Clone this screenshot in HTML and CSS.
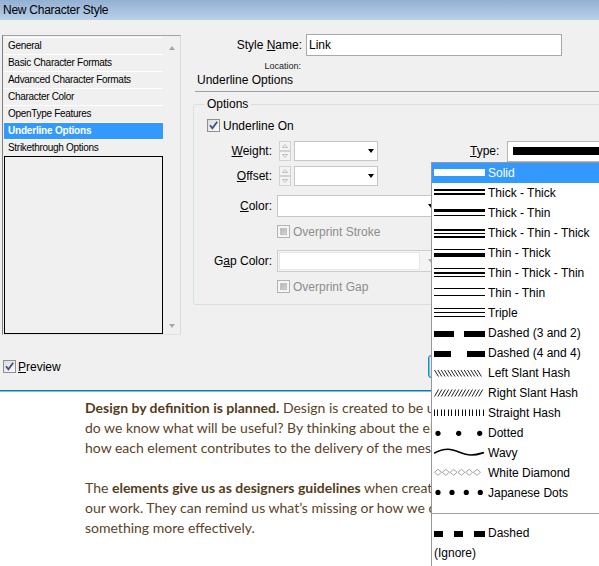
FILE: index.html
```html
<!DOCTYPE html>
<html lang="en">
<head>
<meta charset="utf-8">
<title>New Character Style</title>
<link rel="stylesheet" href="styles.css">
</head>
<body>
<div class="screen">
  <div class="titlebar">New Character Style</div>
  <div class="dialog">
    <div class="dialog-main">
      <div class="nav">
        <div class="nav-list">
          <div class="nav-item">General</div>
          <div class="nav-item">Basic Character Formats</div>
          <div class="nav-item">Advanced Character Formats</div>
          <div class="nav-item">Character Color</div>
          <div class="nav-item">OpenType Features</div>
          <div class="nav-item is-selected">Underline Options</div>
          <div class="nav-item">Strikethrough Options</div>
          <div class="nav-empty"></div>
        </div>
        <div class="nav-scroll">
          <span class="scroll-arrow up"></span>
          <span class="scroll-arrow down"></span>
        </div>
      </div>
      <div class="pane">
        <div class="name-row">
          <span class="name-label">Style <u>N</u>ame:</span>
          <div class="text-field">Link</div>
        </div>
        <div class="location">Location:</div>
        <div class="section-head">Underline Options</div>
        <fieldset class="group">
          <legend>Options</legend>
          <div class="row row-check">
            <span class="cb"><svg width="11" height="11" viewBox="0 0 11 11"><path d="M2 5.3 L4.4 8.2 L9.2 1.8" fill="none" stroke="#3b4f86" stroke-width="1.8"/></svg></span>
            <span class="cb-label">Underline On</span>
          </div>
          <div class="row row-field row-weight">
            <span class="lbl"><u>W</u>eight:</span>
            <span class="spinner"><svg width="12" height="20" viewBox="0 0 12 20"><rect x="0.5" y="0.5" width="11" height="9" fill="#f3f3f3" stroke="#d2d2d2"/><rect x="0.5" y="10.5" width="11" height="9" fill="#f3f3f3" stroke="#d2d2d2"/><path d="M3.5 6.5 L6 3.5 L8.5 6.5Z" fill="none" stroke="#b4b4b4" stroke-width="0.8"/><path d="M3.5 13.5 L6 16.5 L8.5 13.5Z" fill="none" stroke="#b4b4b4" stroke-width="0.8"/></svg></span>
            <span class="select select-small"><span class="arrow"></span></span>
            <span class="lbl type-lbl"><u>T</u>ype:</span>
            <span class="type-field"><span class="type-line"></span></span>
          </div>
          <div class="row row-field row-offset">
            <span class="lbl"><u>O</u>ffset:</span>
            <span class="spinner"><svg width="12" height="20" viewBox="0 0 12 20"><rect x="0.5" y="0.5" width="11" height="9" fill="#f3f3f3" stroke="#d2d2d2"/><rect x="0.5" y="10.5" width="11" height="9" fill="#f3f3f3" stroke="#d2d2d2"/><path d="M3.5 6.5 L6 3.5 L8.5 6.5Z" fill="none" stroke="#b4b4b4" stroke-width="0.8"/><path d="M3.5 13.5 L6 16.5 L8.5 13.5Z" fill="none" stroke="#b4b4b4" stroke-width="0.8"/></svg></span>
            <span class="select select-small"><span class="arrow"></span></span>
          </div>
          <div class="row row-color">
            <span class="lbl"><u>C</u>olor:</span>
            <span class="select select-wide"><span class="arrow"></span></span>
          </div>
          <div class="row row-check row-indent">
            <span class="cb cb-disabled"><span class="cb-fill"></span></span>
            <span class="cb-label is-disabled">Overprint Stroke</span>
          </div>
          <div class="row row-gap">
            <span class="lbl">G<u>a</u>p Color:</span>
            <span class="select select-wide is-disabled"><span class="select-inner"></span><span class="arrow"></span></span>
          </div>
          <div class="row row-check row-indent row-last">
            <span class="cb cb-disabled"><span class="cb-fill"></span></span>
            <span class="cb-label is-disabled">Overprint Gap</span>
          </div>
        </fieldset>
      </div>
    </div>
    <div class="dialog-foot">
      <div class="preview">
        <span class="cb"><svg width="11" height="11" viewBox="0 0 11 11"><path d="M2 5.3 L4.4 8.2 L9.2 1.8" fill="none" stroke="#3b4f86" stroke-width="1.8"/></svg></span>
        <span class="preview-label"><u>P</u>review</span>
      </div>
      <span class="button">OK</span>
    </div>
  </div>

  <div class="article">
    <p><b>Design by definition is planned.</b> Design is created to be useful. How<br>do we know what will be useful? By thinking about the elements and<br>how each element contributes to the delivery of the message.</p>
    <p>The <b>elements give us as designers guidelines</b> when creating and evaluating<br>our work. They can remind us what’s missing or how we can communicate<br>something more effectively.</p>
  </div>

  <div class="menu">
    <div class="menu-item is-active">
      <svg class="ico" width="51" height="20" viewBox="0 0 51 20"><rect x="0" y="6" width="51" height="7" fill="#fff"/></svg>
      <span>Solid</span>
    </div>
    <div class="menu-item">
      <svg class="ico" width="51" height="20" viewBox="0 0 51 20"><rect y="6" width="51" height="2"/><rect y="10" width="51" height="2"/></svg>
      <span>Thick - Thick</span>
    </div>
    <div class="menu-item">
      <svg class="ico" width="51" height="20" viewBox="0 0 51 20"><rect y="6" width="51" height="3"/><rect y="12" width="51" height="1"/></svg>
      <span>Thick - Thin</span>
    </div>
    <div class="menu-item">
      <svg class="ico" width="51" height="20" viewBox="0 0 51 20"><rect y="6" width="51" height="2"/><rect y="10" width="51" height="1"/><rect y="13" width="51" height="2"/></svg>
      <span>Thick - Thin - Thick</span>
    </div>
    <div class="menu-item">
      <svg class="ico" width="51" height="20" viewBox="0 0 51 20"><rect y="6" width="51" height="1"/><rect y="10" width="51" height="4"/></svg>
      <span>Thin - Thick</span>
    </div>
    <div class="menu-item">
      <svg class="ico" width="51" height="20" viewBox="0 0 51 20"><rect y="5" width="51" height="1"/><rect y="9" width="51" height="2"/><rect y="13" width="51" height="1"/></svg>
      <span>Thin - Thick - Thin</span>
    </div>
    <div class="menu-item">
      <svg class="ico" width="51" height="20" viewBox="0 0 51 20"><rect y="5" width="51" height="1"/><rect y="12" width="51" height="1"/></svg>
      <span>Thin - Thin</span>
    </div>
    <div class="menu-item">
      <svg class="ico" width="51" height="20" viewBox="0 0 51 20"><rect y="5" width="51" height="1"/><rect y="9" width="51" height="1"/><rect y="13" width="51" height="1"/></svg>
      <span>Triple</span>
    </div>
    <div class="menu-item">
      <svg class="ico" width="51" height="20" viewBox="0 0 51 20"><rect x="0" y="8" width="20" height="6"/><rect x="30" y="8" width="21" height="6"/></svg>
      <span>Dashed (3 and 2)</span>
    </div>
    <div class="menu-item">
      <svg class="ico" width="51" height="20" viewBox="0 0 51 20"><rect x="0" y="8" width="17" height="6"/><rect x="33" y="8" width="18" height="6"/></svg>
      <span>Dashed (4 and 4)</span>
    </div>
    <div class="menu-item">
      <svg class="ico" width="51" height="20" viewBox="0 0 51 20"><path d="M0.5 7 L4.5 13.5 M3.8 7 L7.8 13.5 M7.1 7 L11.1 13.5 M10.4 7 L14.4 13.5 M13.7 7 L17.7 13.5 M17 7 L21 13.5 M20.3 7 L24.3 13.5 M23.6 7 L27.6 13.5 M26.9 7 L30.9 13.5 M30.2 7 L34.2 13.5 M33.5 7 L37.5 13.5 M36.8 7 L40.8 13.5 M40.1 7 L44.1 13.5 M43.4 7 L47.4 13.5" fill="none" stroke="#222" stroke-width="1"/></svg>
      <span>Left Slant Hash</span>
    </div>
    <div class="menu-item">
      <svg class="ico" width="51" height="20" viewBox="0 0 51 20"><path d="M0.5 13.5 L4.5 6.5 M3.9 13.5 L7.9 6.5 M7.3 13.5 L11.3 6.5 M10.7 13.5 L14.7 6.5 M14.1 13.5 L18.1 6.5 M17.5 13.5 L21.5 6.5 M20.9 13.5 L24.9 6.5 M24.3 13.5 L28.3 6.5 M27.7 13.5 L31.7 6.5 M31.1 13.5 L35.1 6.5 M34.5 13.5 L38.5 6.5 M37.9 13.5 L41.9 6.5 M41.3 13.5 L45.3 6.5 M44.7 13.5 L48.7 6.5" fill="none" stroke="#222" stroke-width="1"/></svg>
      <span>Right Slant Hash</span>
    </div>
    <div class="menu-item">
      <svg class="ico" width="51" height="20" viewBox="0 0 51 20"><path d="M0.5 6.5 V13 M3.5 6.5 V13 M7.5 6.5 V13 M10.5 6.5 V13 M14.5 6.5 V13 M17.5 6.5 V13 M21.5 6.5 V13 M24.5 6.5 V13 M28.5 6.5 V13 M31.5 6.5 V13 M35.5 6.5 V13 M38.5 6.5 V13 M42.5 6.5 V13 M45.5 6.5 V13 M49.5 6.5 V13" fill="none" stroke="#111" stroke-width="1"/></svg>
      <span>Straight Hash</span>
    </div>
    <div class="menu-item">
      <svg class="ico" width="51" height="20" viewBox="0 0 51 20"><circle cx="4" cy="10.3" r="2.6"/><circle cx="24.7" cy="10.3" r="2.6"/><circle cx="45.7" cy="10.3" r="2.6"/></svg>
      <span>Dotted</span>
    </div>
    <div class="menu-item">
      <svg class="ico" width="51" height="20" viewBox="0 0 51 20"><path d="M0 10.3 C4 8 8 6.3 14 6.3 C22 6.3 28 12 37 12 C43 12 46 10.8 50 9.5" fill="none" stroke="#000" stroke-width="1.6"/></svg>
      <span>Wavy</span>
    </div>
    <div class="menu-item">
      <svg class="ico" width="51" height="20" viewBox="0 0 51 20"><path d="M0.5 9.3 L4 6.3 L7.5 9.3 L4 12.3Z M8.3 9.3 L11.8 6.3 L15.3 9.3 L11.8 12.3Z M16.1 9.3 L19.6 6.3 L23.1 9.3 L19.6 12.3Z M23.9 9.3 L27.4 6.3 L30.9 9.3 L27.4 12.3Z M31.7 9.3 L35.2 6.3 L38.7 9.3 L35.2 12.3Z M39.5 9.3 L43 6.3 L46.5 9.3 L43 12.3Z" fill="#fff" stroke="#8a8a8a" stroke-width="0.8"/></svg>
      <span>White Diamond</span>
    </div>
    <div class="menu-item">
      <svg class="ico" width="51" height="20" viewBox="0 0 51 20"><circle cx="4" cy="9.4" r="2.6"/><circle cx="18" cy="9.4" r="2.6"/><circle cx="32.3" cy="9.4" r="2.6"/><circle cx="46.3" cy="9.4" r="2.6"/></svg>
      <span>Japanese Dots</span>
    </div>
    <div class="menu-sep"></div>
    <div class="menu-item">
      <svg class="ico" width="51" height="20" viewBox="0 0 51 20"><rect x="0" y="8" width="9" height="6"/><rect x="20" y="8" width="9" height="6"/><rect x="40" y="8" width="11" height="6"/></svg>
      <span>Dashed</span>
    </div>
    <div class="menu-item">
      <span>(Ignore)</span>
    </div>
  </div>
</div>
</body>
</html>
```

FILE: styles.css
```css
html, body {
  margin: 0;
  padding: 0;
}

* {
  box-sizing: border-box;
}

body {
  width: 599px;
  height: 566px;
  overflow: hidden;
  background: #fff;
  font-family: "Liberation Sans", Arial, sans-serif;
  font-size: 12px;
  color: #000;
}

.screen {
  position: relative;
  width: 599px;
  height: 566px;
  overflow: hidden;
}

/* ---------- title bar ---------- */
.titlebar {
  height: 20px;
  line-height: 21px;
  padding-left: 3px;
  background: linear-gradient(#93b0d2, #b9d1ea);
  font-size: 12px;
  letter-spacing: -0.25px;
  color: #000;
}

/* ---------- dialog ---------- */
.dialog {
  height: 371px;
  background: #f0f0f0;
  border-bottom: 1px solid #1d6fae;
  box-shadow: 0 1px 0 #6cc8ef;
  display: flex;
  flex-direction: column;
}

.dialog-main {
  flex: 1;
  display: flex;
  align-items: flex-start;
  padding-top: 14px;
}

/* left navigation list */
.nav {
  flex: none;
  width: 179px;
  height: 300px;
  margin: 1px 0 0 2px;
  padding: 1px 0 0 1px;
  display: flex;
  border: 1px solid;
  border-color: #a3a3a3 #dadada #e2e2e2 #7f7f7f;
}

.nav-list {
  width: 159px;
  display: flex;
  flex-direction: column;
}

.nav-item {
  height: 17px;
  border-top: 1px solid #fff;
  padding-left: 4px;
  line-height: 16px;
  font-size: 10px;
  letter-spacing: -0.3px;
  white-space: nowrap;
}

.nav-item.is-selected {
  background: #3399ff;
  color: #fff;
  font-weight: bold;
  letter-spacing: -0.2px;
}

.nav-empty {
  flex: 1;
  border: 1px solid #000;
}

.nav-scroll {
  width: 17px;
  display: flex;
  flex-direction: column;
  justify-content: space-between;
  align-items: center;
  padding: 9px 0 6px;
}

.scroll-arrow {
  width: 0;
  height: 0;
  border-left: 3.5px solid transparent;
  border-right: 3.5px solid transparent;
}

.scroll-arrow.up {
  border-bottom: 4px solid #a8a8a8;
}

.scroll-arrow.down {
  border-top: 4px solid #a8a8a8;
}

/* right pane */
.pane {
  flex: none;
  width: 430px;
  margin-left: 12px;
}

.name-row {
  display: flex;
  align-items: center;
}

.name-label {
  width: 109px;
  margin-right: 4px;
  text-align: right;
}

.text-field {
  width: 256px;
  height: 22px;
  border: 1px solid #a9a9a9;
  background: #fff;
  padding-left: 2px;
  line-height: 20px;
}

.location {
  width: 108px;
  margin-top: 5px;
  text-align: right;
  font-size: 9px;
  line-height: 11px;
  color: #1a1a1a;
}

.section-head {
  margin: 1px 0 0 2px;
  padding: 0 0 4px 2px;
  line-height: 14px;
  border-bottom: 1px solid #a0a0a0;
}

.group {
  margin: 5px 0 0 0;
  padding: 0 0 11px 0;
  width: 430px;
  min-width: 0;
  border: 1px solid #d5dfe5;
  border-radius: 3px;
}

.group legend {
  margin-left: 10px;
  padding: 0 3px;
  line-height: 14px;
  font-size: 12px;
}

.row {
  display: flex;
  align-items: center;
}

.row-check {
  height: 13px;
  margin-top: 8px;
  padding-left: 13px;
}

.row-indent {
  padding-left: 83px;
}

.row-weight {
  height: 20px;
  margin-top: 9px;
}

.row-offset {
  height: 20px;
  margin-top: 5px;
}

.row-color {
  height: 22px;
  margin-top: 9px;
}

.row-gap {
  height: 22px;
  margin-top: 12px;
}

.lbl {
  flex: none;
  width: 78px;
  text-align: right;
}

.spinner {
  flex: none;
  display: block;
  height: 20px;
  margin-left: 7px;
}

.spinner svg {
  display: block;
}

.select {
  flex: none;
  display: flex;
  align-items: center;
  justify-content: flex-end;
  background: #fff;
  border: 1px solid #c6c6c6;
}

.select-small {
  width: 84px;
  height: 20px;
  margin-left: 3px;
  padding-right: 3px;
}

.select-wide {
  width: 162px;
  height: 22px;
  margin-left: 5px;
  padding-right: 4px;
}

.arrow {
  width: 0;
  height: 0;
  border-left: 3.5px solid transparent;
  border-right: 3.5px solid transparent;
  border-top: 4px solid #000;
}

.select.is-disabled {
  background: #f4f4f4;
  border-color: #cdcdcd;
  justify-content: space-between;
  padding-left: 1px;
}

.select.is-disabled .arrow {
  border-top-color: #a9a9a9;
}

.select-inner {
  width: 141px;
  height: 18px;
  background: #fff;
  border: 1px solid #e6e6e6;
}

.type-lbl {
  width: 31px;
  margin-left: 92px;
  text-align: left;
}

.type-field {
  flex: none;
  display: flex;
  align-items: center;
  width: 140px;
  height: 21px;
  margin-left: 6px;
  padding-left: 5px;
  background: #fff;
  border: 1px solid #b6b6b6;
}

.type-line {
  display: block;
  width: 130px;
  height: 8px;
  background: #000;
}

/* checkboxes */
.cb {
  flex: none;
  width: 13px;
  height: 13px;
  display: inline-flex;
  align-items: center;
  justify-content: center;
  border: 1px solid #8e8f8f;
  background: linear-gradient(135deg, #dcdcdc, #fbfbfb);
}

.cb svg {
  display: block;
}

.cb-disabled {
  border-color: #b3b3b3;
  background: #f5f5f5;
}

.cb-fill {
  width: 7px;
  height: 7px;
  background: linear-gradient(135deg, #b8b8b8, #d2d2d2);
  border: 1px solid #c2c2c2;
}

.cb-label {
  margin-left: 3px;
  line-height: 14px;
}

.cb-label.is-disabled {
  color: #8d8d8d;
}

/* footer */
.dialog-foot {
  flex: none;
  display: flex;
  align-items: center;
  height: 23px;
  margin-bottom: 12px;
  padding-left: 3px;
}

.preview {
  flex: none;
  width: 425px;
  display: flex;
  align-items: center;
}

.preview-label {
  margin-left: 2px;
}

.button {
  flex: none;
  width: 80px;
  height: 23px;
  border: 1px solid #3c7fb1;
  border-radius: 3px;
  box-shadow: inset 0 0 0 1px #4fd2f8;
  background: linear-gradient(#f2f2f2, #dcdcdc);
  text-align: center;
  line-height: 21px;
}

/* ---------- article text ---------- */
.article {
  width: 431px;
  overflow: hidden;
  padding: 7px 0 0 85px;
  font-family: Lato, "Liberation Sans", sans-serif;
  font-size: 14px;
  line-height: 20px;
  color: #5b4327;
  white-space: nowrap;
}

.article p {
  margin: 0 0 20px;
}

.article b {
  font-weight: bold;
  color: #553c21;
}

/* ---------- dropdown menu ---------- */
.menu {
  position: absolute;
  left: 431px;
  top: 162px;
  width: 190px;
  height: 420px;
  background: #fff;
  border: 1px solid #979797;
  font-size: 12px;
  color: #000;
}

.menu-item {
  display: flex;
  align-items: center;
  height: 20px;
  padding-left: 2px;
  white-space: nowrap;
}

.menu-item .ico {
  flex: none;
  display: block;
  margin-right: 3px;
  shape-rendering: crispEdges;
}

.menu-item .ico circle,
.menu-item .ico path {
  shape-rendering: geometricPrecision;
}

.menu-item.is-active {
  background: #3399ff;
  color: #fff;
}

.menu-sep {
  height: 1px;
  margin: 10px 0 9px;
  background: #a0a0a0;
}
```
